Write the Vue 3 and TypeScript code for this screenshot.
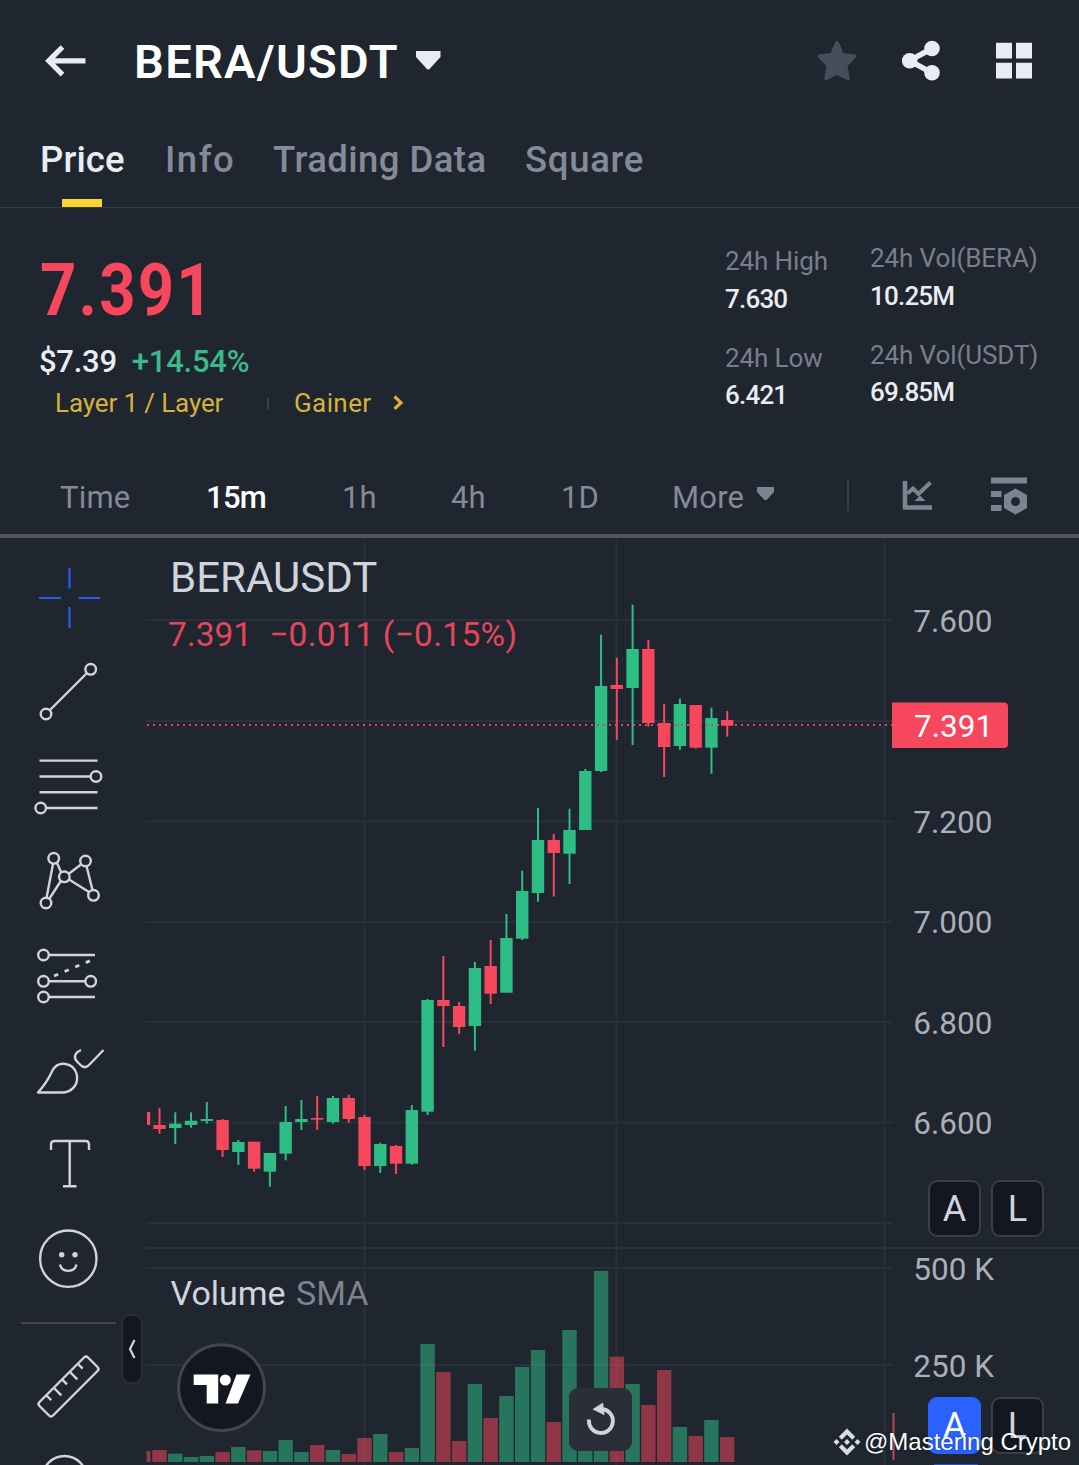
<script setup lang="ts">
import { ref } from 'vue'

type Tone = 'up' | 'down'
type Candle = [tone: Tone, high: number, top: number, bottom: number, low: number, volumeTop: number]

const tabs = ['Price', 'Info', 'Trading Data', 'Square']
const activeTab = ref('Price')

const frames = ['Time', '15m', '1h', '4h', '1D']
const activeFrame = ref('15m')

const stats = [
  [
    { label: '24h High', value: '7.630' },
    { label: '24h Low', value: '6.421' },
  ],
  [
    { label: '24h Vol(BERA)', value: '10.25M' },
    { label: '24h Vol(USDT)', value: '69.85M' },
  ],
]

const candles: Candle[] = [
  ['down', 1108, 1125, 1129, 1133.7, 1450],
  ['up', 1112.3, 1123.7, 1128, 1144, 1453.7],
  ['up', 1112.3, 1120.7, 1125, 1127.7, 1457],
  ['up', 1102, 1119, 1121, 1123.7, 1456],
  ['down', 1119, 1120, 1150, 1157, 1452],
  ['up', 1140, 1142, 1152, 1165, 1447],
  ['down', 1141.7, 1141.7, 1168.7, 1171.7, 1450.3],
  ['up', 1153, 1153, 1171.7, 1186.7, 1451],
  ['up', 1106, 1122, 1153.7, 1160.3, 1440],
  ['up', 1100, 1119, 1122, 1130, 1452],
  ['down', 1096, 1118, 1119.7, 1130, 1445],
  ['up', 1096, 1098, 1122, 1123.7, 1450],
  ['down', 1094.7, 1098, 1119, 1122.7, 1454],
  ['down', 1114.7, 1117, 1166, 1170, 1438],
  ['up', 1142.7, 1144, 1166, 1173, 1434],
  ['down', 1145, 1146, 1163.7, 1174, 1452],
  ['up', 1105, 1110, 1163.7, 1164.7, 1448],
  ['up', 999, 1000, 1111.7, 1115, 1344],
  ['down', 956, 1000, 1006, 1047, 1372],
  ['down', 1002, 1006, 1027, 1034, 1441],
  ['up', 962, 968, 1026, 1050.7, 1384],
  ['down', 940, 966, 993.7, 1004, 1418],
  ['up', 914, 938, 992.7, 992.7, 1396],
  ['up', 870.7, 891, 938.7, 940, 1367],
  ['up', 808, 840, 893, 901.7, 1350],
  ['down', 834, 840, 853, 896.7, 1422],
  ['up', 808.7, 830, 853.7, 884, 1330],
  ['up', 769, 771, 830, 830, 1400],
  ['up', 634.7, 686, 771, 772, 1271],
  ['down', 657.7, 685, 689, 740, 1356.7],
  ['up', 604.7, 649, 688, 745, 1384],
  ['down', 640, 649, 723, 726.7, 1405],
  ['down', 704, 723, 747, 777, 1370],
  ['up', 698.7, 704, 746, 750, 1427],
  ['down', 705, 705, 747.7, 748.7, 1436],
  ['up', 707.7, 718, 747.7, 773.7, 1420],
  ['down', 711, 720, 725.7, 736.7, 1437],
]
const centre = (i: number) => 159.5 + i * 15.77

const gridRows = [620, 721, 821.5, 922, 1022, 1122.5, 1223, 1268, 1365]
const gridColumns = [364.5, 616.5, 884.5]
const axisLabels = [
  { text: '7.600', y: 632 },
  { text: '7.200', y: 833 },
  { text: '7.000', y: 933 },
  { text: '6.800', y: 1034 },
  { text: '6.600', y: 1134 },
  { text: '500 K', y: 1280 },
  { text: '250 K', y: 1377 },
]
</script>

<template>
  <main class="screen">
    <header class="header">
      <svg class="back" width="42" height="34" viewBox="45 44 42 34">
        <path d="M85.5 60.8H50M62.5 47 48.7 60.8 62.5 74.6" fill="none" stroke="#eaecf2" stroke-width="5.2" />
      </svg>
      <h1 class="pair">BERA/USDT</h1>
      <svg class="pair-caret" width="26" height="20" viewBox="416 50 26 20">
        <path d="M417 51h24.500v6L430.500 69q-1.300 1-2.600 0L417 57z" fill="#eaecf2" />
      </svg>
      <svg class="star" width="42" height="42" viewBox="816 40 42 42">
        <path d="M837 43l5 12 12.300 1.200-9 9.300 2.500 12.800-10.800-5.500-10.800 5.500 2.500-12.800-9-9.300L832 55z" fill="#474d5a" stroke="#474d5a" stroke-width="4" stroke-linejoin="round" />
      </svg>
      <svg class="share" width="42" height="42" viewBox="900 40 42 42">
        <path d="M932 48.500 909.500 60.700 932 72.800" fill="none" stroke="#eaecf2" stroke-width="5.500" />
        <circle cx="909.700" cy="60.700" r="7.800" fill="#eaecf2" />
        <circle cx="932" cy="48.500" r="7.800" fill="#eaecf2" />
        <circle cx="932" cy="72.700" r="7.800" fill="#eaecf2" />
      </svg>
      <svg class="apps" width="38" height="38" viewBox="995 42 38 38">
        <path d="M996 42.700h16v15.800h-16zM1016 42.700h16v15.800h-16zM996 62.700h16v15.800h-16zM1016 62.700h16v15.800h-16z" fill="#eaecf2" />
      </svg>
    </header>

    <nav class="tabs">
      <button v-for="tab in tabs" :key="tab" class="tab" :class="[{ active: tab === activeTab }, tab.split(' ')[0].toLowerCase()]" @click="activeTab = tab">{{ tab }}</button>
    </nav>

    <section class="summary">
      <div class="quote">
        <div class="last">7.391</div>
        <div class="change"><span class="fiat">$7.39</span><span class="percent">+14.54%</span></div>
        <div class="tags">
          <span class="layer">Layer 1 / Layer</span>
          <i class="tag-rule"></i>
          <span class="gainer">Gainer</span>
          <svg width="12" height="18" viewBox="393 393 12 18"><path d="M394.500 395.500l6.500 6.200-6.500 6.200" fill="none" stroke="#d6b13c" stroke-width="3.200" /></svg>
        </div>
      </div>
      <div v-for="(column, c) in stats" :key="c" class="stat-column">
        <dl v-for="stat in column" :key="stat.label" class="stat">
          <dt>{{ stat.label }}</dt>
          <dd>{{ stat.value }}</dd>
        </dl>
      </div>
    </section>

    <nav class="frames">
      <button v-for="frame in frames" :key="frame" class="frame" :class="{ active: frame === activeFrame }" @click="activeFrame = frame">{{ frame }}</button>
      <button class="frame more">More
        <svg width="18" height="14" viewBox="756 486 18 14"><path d="M757 487h17v5l-7.500 8h-2l-7.500-8z" fill="#7d8491" /></svg>
      </button>
      <i class="frame-rule"></i>
      <svg width="32" height="32" viewBox="901 479 32 32">
        <path d="M905 480v26.500h27" fill="none" stroke="#7d8491" stroke-width="4.500" />
        <path d="M907.500 492.500l5.500-5 5.500 5.500 12-11.500" fill="none" stroke="#7d8491" stroke-width="4" />
        <path d="M920 494.500l5.500 5.500h-11z" fill="#7d8491" />
      </svg>
      <svg width="38" height="40" viewBox="990 476 38 40">
        <path d="M991 477.500h36v6h-36zM991 491h10.500v6H991zM991 505h10.500v6H991z" fill="#7d8491" />
        <path fill-rule="evenodd" d="M1015.500 488.500l11.500 6.500v13l-11.500 6.500-11.500-6.500v-13zM1015.500 497a4.500 4.500 0 1 0 0 9a4.500 4.500 0 1 0 0-9z" fill="#7d8491" />
      </svg>
    </nav>

    <section class="chart">
      <aside class="tools">
        <svg width="146" height="107" viewBox="0 538 146 107"><path d="M69.500 568v20.500M69.500 607v21M39 598h22M78.500 598H100" stroke="#2b5bea" stroke-width="2.200" /></svg>
        <svg width="146" height="95" viewBox="0 645 146 95"><circle cx="46" cy="714" r="5.300" /><circle cx="90.700" cy="669.300" r="5.300" /><path d="M50 710l37-37" /></svg>
        <svg width="146" height="95" viewBox="0 740 146 95"><path d="M39.500 760.600h58M39.500 776.500h51M39.500 792.300h58M46 808h51.500" /><circle cx="96" cy="776.500" r="5.300" /><circle cx="40.700" cy="808" r="5.300" /></svg>
        <svg width="146" height="95" viewBox="0 835 146 95"><path d="M53 864l-6.500 34M57 863l4 9M68.500 874l12.500-9.500M86.500 866l6 24M69 879.500l20 12.500M60.500 881.500l-11 17" /><circle cx="53.700" cy="858.300" r="5.300" /><circle cx="85.500" cy="861" r="5.300" /><circle cx="64.300" cy="876.800" r="5.300" /><circle cx="93.500" cy="895.300" r="5.300" /><circle cx="46" cy="903" r="5.300" /></svg>
        <svg width="146" height="95" viewBox="0 930 146 95"><circle cx="43.500" cy="955" r="5.300" /><circle cx="43.500" cy="981.300" r="5.300" /><circle cx="90.700" cy="981.300" r="5.300" /><circle cx="43.500" cy="997" r="5.300" /><path d="M49 955h46M49 981.300h36.500M49 997h46" /><path d="M54 976l38-16" stroke-dasharray="4.500 7" stroke-width="2.800" /></svg>
        <svg width="146" height="95" viewBox="0 1025 146 95"><path d="M38 1092.500c10-11 11-15 15-23 6-9 20-7 23.500 4 3 11-5 19-14.500 19zM81 1050c-6 2.500-8 7.500-4 11.500l3.500 3.500c3 3 6 2.500 8.500 0l14.500-15" stroke-linejoin="round" /></svg>
        <svg width="146" height="92" viewBox="0 1120 146 92"><path d="M51 1150v-5.500q0-3.500 3.500-3.500h31q3.500 0 3.500 3.500v5.500M69.700 1141v45.500M63 1186.300h13.500" /></svg>
        <svg width="146" height="110" viewBox="0 1212 146 110"><circle cx="68.300" cy="1258.700" r="28.200" /><circle class="eye" cx="61.700" cy="1254.700" r="2.700" /><circle class="eye" cx="75" cy="1254.700" r="2.700" /><path d="M60 1264.500c2 8.500 14.500 8.500 16.500 0" /></svg>
        <i class="tool-rule"></i>
        <svg width="146" height="112" viewBox="0 1324 146 112"><path d="M84 1357.500q2-2 4 0l9.500 9.500q2 2 0 4L53 1415.500q-2 2-4 0l-9.500-9.500q-2-2 0-4zM46.500 1395.500l4.700 4.700M54 1388l7.300 7.300M62.300 1379.700l4.700 4.700M70 1372l7.300 7.300M78 1364l4.700 4.700" /></svg>
        <svg width="146" height="29" viewBox="0 1436 146 29"><circle cx="64.500" cy="1478" r="22" /></svg>
      </aside>

      <svg class="plot" width="933" height="927" viewBox="146 538 933 927">
        <path v-for="y in gridRows" :key="'r' + y" :d="`M146 ${y}H892`" class="grid" />
        <path v-for="x in gridColumns" :key="'c' + x" :d="`M${x} 538V1465`" class="grid" />
        <path d="M146 1248H1079" class="grid pane" />
        <rect x="146.500" y="1451" width="4" height="11" class="volume down" />
        <rect x="147" y="1112" width="3.200" height="13" class="down" />
        <g v-for="(candle, i) in candles" :key="i" :class="candle[0]">
          <rect :x="centre(i) - 7.200" :y="candle[5]" width="14.400" :height="1462 - candle[5]" class="volume" />
          <rect :x="centre(i) - 1" :y="candle[1]" width="2" :height="candle[4] - candle[1]" />
          <rect :x="centre(i) - 6.200" :y="candle[2]" width="12.400" :height="candle[3] - candle[2]" />
        </g>
        <path d="M147 725H892" stroke="#d34d60" stroke-width="2" stroke-dasharray="2 4" />
        <text v-for="label in axisLabels" :key="label.text" x="913.300" :y="label.y" class="axis">{{ label.text }}</text>
        <path d="M892 702.500h112q4 0 4 4v37.500q0 4-4 4H892z" fill="#f6475d" />
        <text x="914" y="737" class="axis tag">7.391</text>
        <path d="M893.500 1413v47" stroke="#c24259" stroke-width="2" />
      </svg>

      <div class="legend">
        <div class="symbol">BERAUSDT</div>
        <div class="legend-values"><span>7.391</span><span class="delta">−0.011 (−0.15%)</span></div>
      </div>
      <div class="volume-legend">Volume <span>SMA</span></div>

      <svg class="brand" width="92" height="92" viewBox="176 1342 92 92">
        <circle cx="221.500" cy="1387.700" r="43" fill="#131722" stroke="#434651" stroke-width="3" />
        <path d="M193.700 1374.500h24.500v29h-11.500V1385h-13zM236.500 1374.500h14L238 1403.500h-12.500z" fill="#fff" />
        <circle cx="225.300" cy="1380" r="5.500" fill="#fff" />
      </svg>

      <button class="reset" aria-label="Reset chart">
        <svg width="63" height="63" viewBox="569.500 1388 63 63">
          <path d="M589.500 1419.500a12 12 0 1 0 12.500-10.500" fill="none" stroke="#d1d4dc" stroke-width="3.800" />
          <path d="M593 1409.300l10.500-6.800 1.500 12.800z" fill="#d1d4dc" />
        </svg>
      </button>

      <div class="scale price-scale"><button>A</button><button>L</button></div>
      <div class="scale volume-scale"><button class="on">A</button><button>L</button></div>
      <i class="scale-edge"></i>

      <button class="collapse" aria-label="Collapse toolbar">
        <svg width="8" height="20" viewBox="0 0 8 20"><path d="M6.500 1 2 10l4.500 9" fill="none" stroke="#d1d4dc" stroke-width="2.200" /></svg>
      </button>

      <div class="credit">
        <svg width="28" height="28" viewBox="-14 -14 28 28">
          <path d="M0-13.500l8.200 8.200-3 3L0-7.500l-5.200 5.200-3-3zM0 13.500l-8.200-8.200 3-3L0 7.500l5.200-5.200 3 3zM0-3L3 0 0 3-3 0zM-10.500-3l3 3-3 3-3-3zM10.500-3l3 3-3 3-3-3z" fill="#d9dde6" />
        </svg>
        <span>@Mastering Crypto</span>
      </div>
    </section>
  </main>
</template>

<style>
body {
  background: #1f262f;
}
</style>

<style scoped>
.screen {
  width: 1079px;
  height: 1465px;
  overflow: hidden;
  background: #1f262f;
  color: #eaecef;
  font-family: Roboto, 'Liberation Sans', sans-serif;
}
button {
  padding: 0;
  border: 0;
  background: none;
  color: inherit;
  font: inherit;
}
svg {
  display: block;
  flex: none;
}
i {
  display: block;
}

.header {
  display: flex;
  align-items: center;
  height: 122px;
  padding: 0 46px 0 45px;
}
.pair {
  width: 281px;
  margin: 1px 0 0 47px;
  color: #fff;
  font-size: 47px;
  font-weight: 600;
  line-height: 60px;
  letter-spacing: 1.3px;
  white-space: nowrap;
}
.pair-caret {
  margin-top: -2px;
}
.star {
  margin-left: auto;
}
.share {
  margin-left: 42px;
}
.apps {
  margin-left: 53px;
}

.tabs {
  display: flex;
  height: 85px;
  padding-left: 39px;
  border-bottom: 1px solid #343b46;
}
.tab {
  position: relative;
  height: 85px;
  padding: 0 0 10px 1px;
  color: #848a98;
  font-size: 36.5px;
  font-weight: 500;
  text-align: left;
  white-space: nowrap;
}
.tab.price { width: 125px; letter-spacing: 0.1px; }
.tab.info { width: 108px; letter-spacing: 1.5px; }
.tab.trading { width: 251px; letter-spacing: 0.45px; }
.tab.square { padding-left: 2px; letter-spacing: 0.7px; }
.tab.active {
  color: #eaecf2;
}
.tab.active::after {
  content: '';
  position: absolute;
  left: 23px;
  bottom: 0;
  width: 40px;
  height: 8px;
  background: #fcd535;
}

.summary {
  display: flex;
  height: 252px;
}
.quote {
  width: 685px;
  padding: 47px 0 0 40px;
}
.last {
  width: 200px;
  color: #f6475d;
  font-size: 72px;
  font-weight: 700;
  line-height: 72px;
  letter-spacing: 2.5px;
  transform: scaleX(0.88);
  transform-origin: left;
}
.change {
  display: flex;
  gap: 15px;
  margin-top: 15px;
  font-size: 31px;
  font-weight: 500;
  line-height: 40px;
  letter-spacing: -0.25px;
}
.fiat {
  margin-left: -1px;
}
.percent {
  color: #3cb98a;
}
.tags {
  display: flex;
  align-items: center;
  margin: 6px 0 0 15px;
  color: #d6b13c;
  font-size: 26px;
  line-height: 30px;
}
.layer {
  width: 169px;
  letter-spacing: -0.12px;
  white-space: nowrap;
}
.tag-rule {
  width: 2px;
  height: 11px;
  margin: 0 25px 0 43px;
  background: #3a414c;
}
.gainer {
  margin-right: 21px;
  letter-spacing: 0.4px;
}
.stat-column {
  width: 145px;
  padding-top: 38px;
  white-space: nowrap;
}
.stat-column + .stat-column {
  width: 200px;
  padding-top: 35px;
}
.stat {
  margin: 0 0 29px;
  font-size: 26px;
  line-height: 30px;
  letter-spacing: -0.1px;
}
.stat dt {
  color: #787f8b;
}
.stat dd {
  margin: 7.5px 0 0;
  font-weight: 500;
  letter-spacing: -0.8px;
}

.frames {
  display: grid;
  grid-template-columns: 146px 136px 109px 110px 111px 175px 54px 89px 38px;
  align-items: center;
  height: 74px;
  padding-left: 60px;
  border-bottom: 4px solid #51555f;
}
.frame {
  color: #848a98;
  font-size: 31px;
  text-align: left;
  letter-spacing: 0.2px;
}
.frame.active {
  color: #fff;
  font-weight: 500;
  letter-spacing: -0.7px;
}
.more {
  display: flex;
  align-items: center;
  gap: 12px;
}
.more svg {
  margin-top: -8px;
}
.frame-rule {
  width: 2px;
  height: 32px;
  margin-top: -4px;
  background: #363d48;
}
.frames > svg {
  margin-top: -3px;
}

.chart {
  position: relative;
  display: flex;
  height: 927px;
}
.tools {
  width: 146px;
  flex: none;
}
.tools svg {
  fill: none;
  stroke: #d1d4dc;
  stroke-width: 2.4;
}
.tools .eye {
  fill: #d1d4dc;
  stroke: none;
}
.tool-rule {
  width: 95px;
  height: 2px;
  margin-left: 21px;
  background: #434651;
}
.grid {
  stroke: #29303a;
  stroke-width: 2;
}
.pane {
  stroke: #2c323d;
}
.up {
  fill: #2ebd85;
}
.down {
  fill: #f6475d;
}
.volume {
  opacity: 0.53;
}
.axis {
  fill: #abafb9;
  font-size: 31.5px;
}
.axis.tag {
  fill: #fff;
}
.legend {
  position: absolute;
  top: 14px;
  left: 168px;
}
.symbol {
  margin-left: 2px;
  color: #d1d4dc;
  font-size: 42px;
  line-height: 52px;
}
.legend-values {
  display: flex;
  gap: 17px;
  margin-top: 11px;
  color: #e5465a;
  font-size: 33.5px;
  line-height: 40px;
  white-space: nowrap;
}
.delta {
  letter-spacing: 0.3px;
}
.volume-legend {
  position: absolute;
  top: 735px;
  left: 170.5px;
  color: #d1d4dc;
  font-size: 34px;
  line-height: 40px;
}
.volume-legend span {
  margin-left: 2px;
  color: #7e838f;
}
.brand {
  position: absolute;
  top: 804px;
  left: 176px;
}
.reset {
  position: absolute;
  top: 850px;
  left: 569px;
  border-radius: 9px;
  background: #2a2e39;
}
.scale {
  position: absolute;
  left: 928px;
  display: flex;
  gap: 10px;
}
.price-scale {
  top: 642px;
}
.volume-scale {
  top: 859px;
}
.scale button {
  box-sizing: border-box;
  width: 53px;
  height: 57px;
  border: 2px solid #3b3e49;
  border-radius: 9px;
  background: #131722;
  color: #d1d4dc;
  font-size: 36px;
}
.scale .on {
  border-color: #2962ff;
  background: #2962ff;
  color: #fff;
}
.scale-edge {
  position: absolute;
  top: 926px;
  left: 934px;
  width: 44px;
  height: 1px;
  background: #2450c4;
}
.collapse {
  position: absolute;
  top: 776px;
  left: 121px;
  display: flex;
  align-items: center;
  justify-content: center;
  box-sizing: border-box;
  width: 22px;
  height: 70px;
  border: 2px solid #2a2e39;
  border-radius: 9px;
  background: #131722;
}
.credit {
  position: absolute;
  top: 890px;
  left: 833px;
  display: flex;
  align-items: center;
  gap: 3px;
  color: #fff;
  font-family: 'Liberation Sans', Arial, sans-serif;
  font-size: 24px;
  line-height: 28px;
  white-space: nowrap;
  text-shadow: 0 0 2px #0008;
}
</style>
